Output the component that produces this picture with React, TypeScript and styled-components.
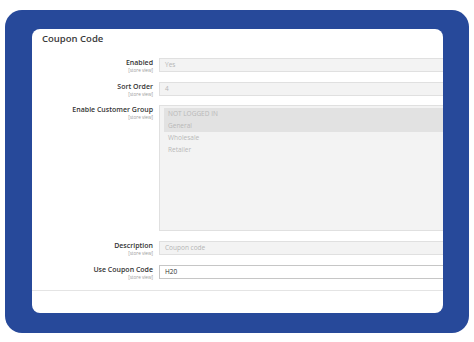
import styled, { createGlobalStyle } from "styled-components";

const BLUE = "#27499a";

const GlobalStyle = createGlobalStyle`
  html, body {
    margin: 0;
    padding: 0;
    background: #ffffff;
    font-family: "Open Sans", "Liberation Sans", sans-serif;
  }
`;

const Frame = styled.div`
  box-sizing: border-box;
  margin: 10px 5px 9px 5px;
  height: 323px;
  background: ${BLUE};
  border-radius: 17px;
  padding: 19px 26px 20px 27px;
`;

const Panel = styled.div`
  height: 100%;
  background: #ffffff;
  border-radius: 8px;
  overflow: hidden;
  display: flex;
  flex-direction: column;
`;

const Title = styled.div`
  padding: 3px 10px 0 10px;
  height: 26px;
  font-size: 9.5px;
  font-weight: 600;
  color: #3a3a3a;
  line-height: 13px;
`;

const Form = styled.div`
  display: flex;
  flex-direction: column;
`;

const Row = styled.div<{ $gap?: number }>`
  display: grid;
  grid-template-columns: 121px 300px;
  column-gap: 6px;
  align-items: start;
  margin-top: ${(p) => p.$gap ?? 0}px;
`;

const Label = styled.div`
  text-align: right;
  font-size: 7px;
  font-weight: 600;
  color: #333333;
  line-height: 8px;
  padding-top: 1px;
  white-space: nowrap;
`;

const Scope = styled.span`
  display: block;
  font-size: 4.6px;
  font-weight: 400;
  color: #9a9a9a;
  line-height: 6px;
`;

const Input = styled.div<{ $active?: boolean }>`
  box-sizing: border-box;
  height: 14px;
  border: 1px solid ${(p) => (p.$active ? "#c6c6c6" : "#e0e0e0")};
  background: ${(p) => (p.$active ? "#ffffff" : "#f3f3f3")};
  color: ${(p) => (p.$active ? "#303030" : "#b5b5b5")};
  font-size: 6.5px;
  line-height: 12px;
  padding: 0 5px;
`;

const MultiSelect = styled.div`
  box-sizing: border-box;
  height: 126px;
  border: 1px solid #e0e0e0;
  background: #f3f3f3;
  padding: 2px 0 0 4px;
`;

const Option = styled.div<{ $selected?: boolean }>`
  height: 12px;
  line-height: 12px;
  font-size: 6.5px;
  padding-left: 4px;
  color: #b8b8b8;
  background: ${(p) => (p.$selected ? "#e2e2e2" : "transparent")};
`;

const Divider = styled.div`
  margin-top: 10px;
  border-top: 1px solid #e4e4e4;
`;

const groups = [
  { name: "NOT LOGGED IN", selected: true },
  { name: "General", selected: true },
  { name: "Wholesale", selected: false },
  { name: "Retailer", selected: false },
];

export default function App() {
  return (
    <>
      <GlobalStyle />
      <Frame>
        <Panel>
          <Title>Coupon Code</Title>
          <Form>
            <Row>
              <Label>
                Enabled
                <Scope>[store view]</Scope>
              </Label>
              <Input>Yes</Input>
            </Row>
            <Row $gap={9}>
              <Label>
                Sort Order
                <Scope>[store view]</Scope>
              </Label>
              <Input>4</Input>
            </Row>
            <Row $gap={8}>
              <Label>
                Enable Customer Group
                <Scope>[store view]</Scope>
              </Label>
              <MultiSelect>
                {groups.map((g) => (
                  <Option key={g.name} $selected={g.selected}>
                    {g.name}
                  </Option>
                ))}
              </MultiSelect>
            </Row>
            <Row $gap={10}>
              <Label>
                Description
                <Scope>[store view]</Scope>
              </Label>
              <Input>Coupon code</Input>
            </Row>
            <Row $gap={9}>
              <Label>
                Use Coupon Code
                <Scope>[store view]</Scope>
              </Label>
              <Input $active>H20</Input>
            </Row>
          </Form>
          <Divider />
        </Panel>
      </Frame>
    </>
  );
}
